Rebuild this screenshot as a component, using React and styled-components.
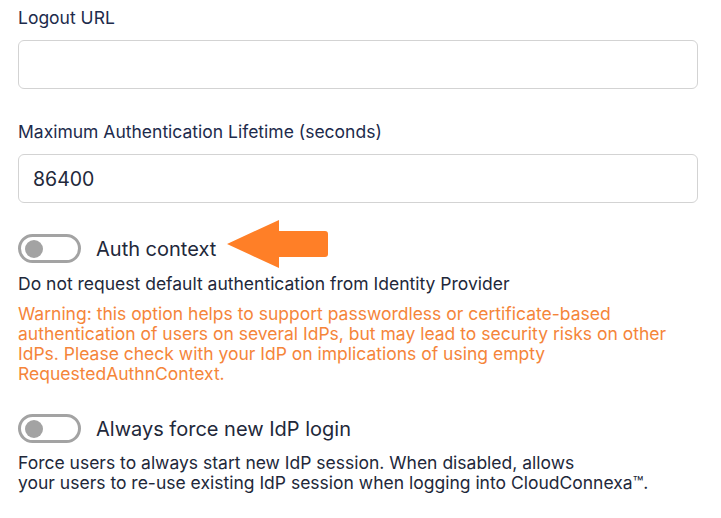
import React from 'react';
import styled, { createGlobalStyle } from 'styled-components';

const GlobalStyle = createGlobalStyle`
  body {
    margin: 0;
    background: #fff;
    font-family: Inter, "Noto Sans", sans-serif;
  }
`;

const Page = styled.div`
  position: relative;
  width: 721px;
  height: 518px;
  padding: 6px 23px 0 18px;
  box-sizing: border-box;
  overflow: hidden;
`;

const Field = styled.div`
  display: flex;
  flex-direction: column;
  gap: 10px;
  margin-bottom: 31px;
`;

const Label = styled.label`
  font-size: 17.5px;
  line-height: 24px;
  color: #1d2b4c;
`;

const Input = styled.input`
  box-sizing: border-box;
  height: 49px;
  width: 100%;
  border: 1px solid #d3d3d3;
  border-radius: 6px;
  padding: 0 14px;
  font-family: inherit;
  font-size: 19.5px;
  color: #22283a;
  outline: none;
`;

const ToggleRow = styled.div`
  display: flex;
  align-items: center;
  gap: 15px;
  margin-top: ${p => p.$top}px;
`;

const Switch = styled.span`
  box-sizing: border-box;
  width: 63px;
  height: 29px;
  border: 3px solid #a3a3a3;
  border-radius: 15px;
  display: flex;
  align-items: center;
  padding-left: 4px;

  &::after {
    content: '';
    width: 18px;
    height: 18px;
    border-radius: 50%;
    background: #a3a3a3;
  }
`;

const ToggleLabel = styled.span`
  font-size: 20px;
  line-height: 28px;
  color: #22283a;
`;

const Help = styled.p`
  margin: ${p => p.$top}px 0 0;
  font-size: 17.5px;
  line-height: 20px;
  color: ${p => (p.$warn ? '#f5853a' : '#22283a')};
`;

const Arrow = styled.svg`
  position: absolute;
  left: 227px;
  top: 220px;
`;

export default function App() {
  return (
    <>
      <GlobalStyle />
      <Page>
        <Field>
          <Label>Logout URL</Label>
          <Input />
        </Field>
        <Field>
          <Label>Maximum Authentication Lifetime (seconds)</Label>
          <Input defaultValue="86400" />
        </Field>

        <ToggleRow $top={0}>
          <Switch />
          <ToggleLabel>Auth context</ToggleLabel>
        </ToggleRow>
        <Help $top={11}>Do not request default authentication from Identity Provider</Help>
        <Help $top={10} $warn>
          Warning: this option helps to support passwordless or certificate-based
          <br />
          authentication of users on several IdPs, but may lead to security risks on other
          <br />
          IdPs. Please check with your IdP on implications of using empty
          <br />
          RequestedAuthnContext.
        </Help>

        <ToggleRow $top={30}>
          <Switch />
          <ToggleLabel>Always force new IdP login</ToggleLabel>
        </ToggleRow>
        <Help $top={10}>
          Force users to always start new IdP session. When disabled, allows
          <br />
          your users to re-use existing IdP session when logging into CloudConnexa™.
        </Help>

        <Arrow width="102" height="48" viewBox="0 0 102 48">
          <path
            d="M0 24 L52 0 L52 11 L98 11 Q101 11 101 14 L101 34 Q101 37 98 37 L52 37 L52 48 Z"
            fill="#ff7f27"
          />
        </Arrow>
      </Page>
    </>
  );
}
